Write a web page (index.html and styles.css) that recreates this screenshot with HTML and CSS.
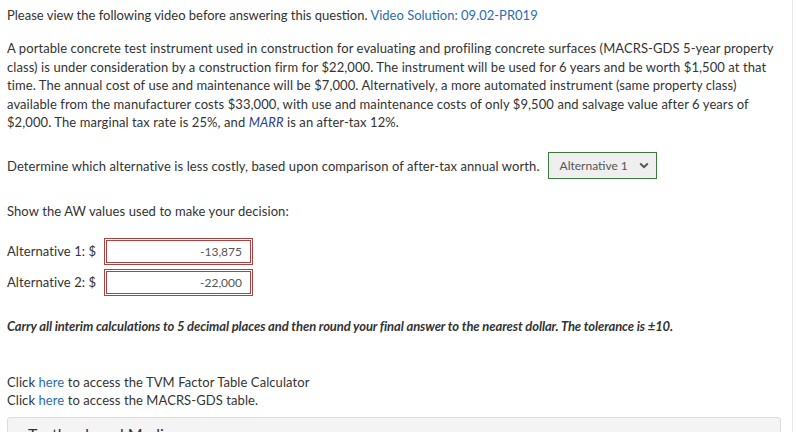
FILE: index.html
```html
<!DOCTYPE html>
<html>
<head>
<meta charset="utf-8">
<link rel="stylesheet" href="styles.css">
</head>
<body>
<div class="page">
  <p class="intro">Please view the following video before answering this question. <a class="link">Video Solution: 09.02-PR019</a></p>
  <p class="problem">A portable concrete test instrument used in construction for evaluating and profiling concrete surfaces (MACRS-GDS 5-year property class) is under consideration by a construction firm for $22,000. The instrument will be used for 6 years and be worth $1,500 at that time. The annual cost of use and maintenance will be $7,000. Alternatively, a more automated instrument (same property class) available from the manufacturer costs $33,000, with use and maintenance costs of only $9,500 and salvage value after 6 years of $2,000. The marginal tax rate is 25%, and <i class="var">MARR</i> is an after-tax 12%.</p>
  <div class="determine">
    <span>Determine which alternative is less costly, based upon comparison of after-tax annual worth.</span>
    <span class="select">Alternative 1
      <svg class="chev" width="10" height="7" viewBox="0 0 10 7"><path d="M1.2 1.5 L5 5.2 L8.8 1.5" fill="none" stroke="#555" stroke-width="2"/></svg>
    </span>
  </div>
  <p class="show">Show the AW values used to make your decision:</p>
  <div class="answers">
    <div class="row"><span class="lbl">Alternative 1: $</span><span class="input">-13,875</span></div>
    <div class="row"><span class="lbl">Alternative 2: $</span><span class="input">-22,000</span></div>
  </div>
  <p class="note">Carry all interim calculations to 5 decimal places and then round your final answer to the nearest dollar. The tolerance is ±10.</p>
  <div class="links">
    <div>Click <a class="link">here</a> to access the TVM Factor Table Calculator</div>
    <div>Click <a class="link">here</a> to access the MACRS-GDS table.</div>
  </div>
  <div class="media"><span>Textbook and Media</span></div>
</div>
</body>
</html>
```
FILE: styles.css
```css
html, body { margin: 0; padding: 0; background: #fff; }
body { font-family: Lato, "Noto Sans", sans-serif; font-size: 13px; color: #333; overflow: hidden; letter-spacing: 0.08px; }
.page { width: 785px; height: 432px; overflow: hidden; padding: 0 0 0 7px; border-right: 1px solid #e8e8e8; box-sizing: content-box; }
p { margin: 0; }
.intro { padding-top: 6px; line-height: 18px; letter-spacing: 0; }
.link { color: #2a6db0; }
.problem { margin-top: 15px; line-height: 18.5px; padding-right: 7px; }
.var { color: #2c3e8f; }
.determine { margin-top: 21px; display: flex; align-items: center; gap: 8px; height: 26px; white-space: nowrap; }
.select { display: inline-flex; align-items: center; justify-content: space-between; box-sizing: border-box; width: 109px; height: 27px; border: 1px solid #3a7a3a; background: #efefef; color: #555; font-size: 12px; letter-spacing: 0; padding: 0 7px 0 11px; }
.show { margin-top: 23px; line-height: 18px; }
.answers { margin-top: 18px; display: flex; flex-direction: column; gap: 4px; }
.row { display: flex; align-items: center; }
.lbl { width: 97px; white-space: nowrap; }
.input { box-sizing: border-box; width: 149px; height: 27px; border: 3px double #a94442; display: flex; align-items: center; justify-content: flex-end; padding-right: 8px; font-size: 12px; color: #555; letter-spacing: 0; }
.note { margin-top: 21px; font-style: italic; font-weight: bold; line-height: 18px; letter-spacing: -0.1px; white-space: nowrap; }
.links { margin-top: 38px; line-height: 18px; }
.media { margin-top: 8px; width: 774px; height: 40px; box-sizing: border-box; border: 1px solid #dcdcdc; border-radius: 3px; background: #f4f4f4; padding: 6px 0 0 20px; font-size: 16px; }
```
